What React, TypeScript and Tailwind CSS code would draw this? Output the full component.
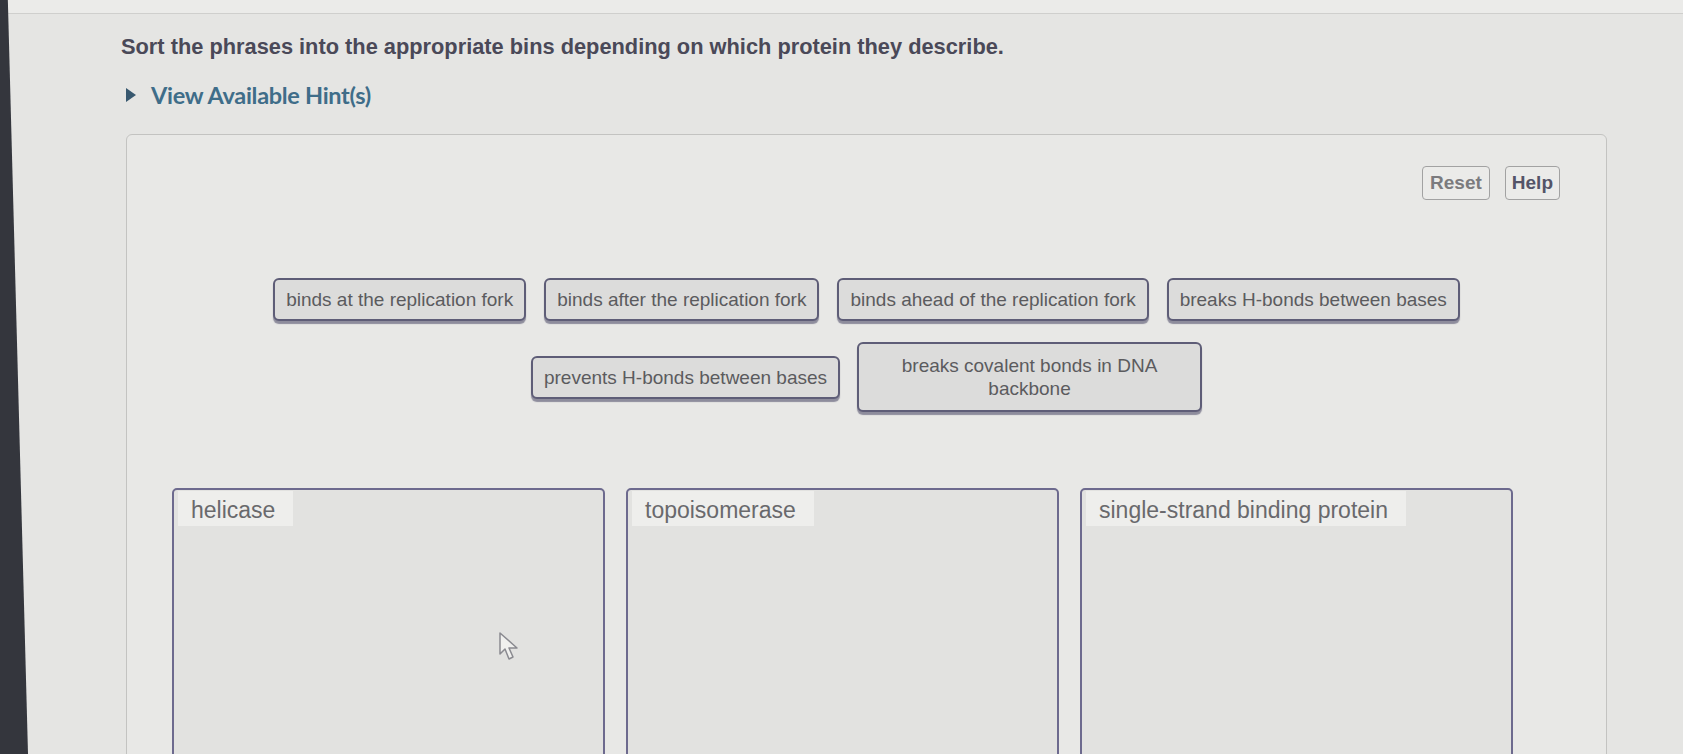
const phrasesTop = [
  "binds at the replication fork",
  "binds after the replication fork",
  "binds ahead of the replication fork",
  "breaks H-bonds between bases",
];

const bins = ["helicase", "topoisomerase", "single-strand binding protein"];

const Chip = ({ label, wide }: { label: string; wide?: boolean }) => (
  <div
    className={`border-2 border-[#5e5d77] bg-[#dcdcdb] rounded-[6px] shadow-[0_3px_1px_#8d8c9c] py-[8px] text-[19px] leading-[23px] text-[#5b5b5e] text-center ${
      wide ? "w-[345px] px-[9px] py-[10px]" : "px-[11px]"
    }`}
  >
    {label}
  </div>
);

const App = () => {
  return (
    <div
      className="relative h-screen w-full overflow-hidden bg-[#e5e5e3]"
      style={{ fontFamily: '"Liberation Sans", Arial, sans-serif' }}
    >
      {/* monitor bezel on the left */}
      <div className="absolute left-0 top-0 h-full w-[28px] pointer-events-none">
        <div className="h-full w-full bg-[#34363d] [clip-path:polygon(0_0,28%_0,100%_100%,0_100%)]"></div>
      </div>

      <div className="h-[14px] bg-[#ebebe9] border-b border-[#cfcfcd]"></div>

      <div className="pl-[121px] pt-[21px]">
        <h1 className="text-[21.8px] leading-[24px] font-bold text-[#4a4958]">
          Sort the phrases into the appropriate bins depending on which protein they describe.
        </h1>

        <div className="flex items-center gap-[15px] mt-[23px] pl-[5px]">
          <svg width="10" height="14" viewBox="0 0 10 14">
            <path d="M0 0 L10 7 L0 14 Z" fill="#38586f" />
          </svg>
          <span
            className="text-[23.5px] leading-[26px] font-bold text-[#3f6d89] tracking-[-0.3px]"
            style={{ fontFamily: "Lato, sans-serif" }}
          >
            View Available Hint(s)
          </span>
        </div>
      </div>

      {/* activity panel */}
      <div className="ml-[126px] mt-[26px] w-[1481px] h-[700px] border border-[#c3c3c1] rounded-[6px] bg-[#e8e8e6]">
        <div className="flex justify-end gap-[15px] pt-[31px] pr-[46px]">
          <button className="h-[34px] px-[7px] border-[1.5px] border-[#a2a2a2] rounded-[4px] bg-[#ebebe9] text-[19px] font-bold text-[#7b7b7e]">
            Reset
          </button>
          <button className="h-[34px] px-[6px] border-[1.5px] border-[#a2a2a2] rounded-[4px] bg-[#ebebe9] text-[19px] font-bold text-[#545468]">
            Help
          </button>
        </div>

        <div className="mt-[78px] flex flex-col items-center gap-[21px]">
          <div className="flex justify-center gap-[18px]">
            {phrasesTop.map((p) => (
              <Chip key={p} label={p} />
            ))}
          </div>
          <div className="flex items-center justify-center gap-[17px]">
            <Chip label="prevents H-bonds between bases" />
            <Chip label="breaks covalent bonds in DNA backbone" wide />
          </div>
        </div>

        <div className="mt-[76px] pl-[45px] flex gap-[21px]">
          {bins.map((b) => (
            <div
              key={b}
              className="w-[433px] h-[300px] border-2 border-[#6d6a8e] rounded-t-[5px] bg-[#e2e2e0]"
            >
              <div className="ml-[4px] mt-[1px] inline-block h-[35px] pl-[13px] pr-[18px] bg-[#eeeeec] text-[23px] leading-[38px] text-[#69696c]">
                {b}
              </div>
            </div>
          ))}
        </div>
      </div>

      {/* mouse pointer */}
      <svg
        className="absolute left-[499px] top-[632px] pointer-events-none"
        width="24"
        height="32"
        viewBox="0 0 24 32"
      >
        <path
          d="M1 1 L1 22 L6 17 L10 27 L14 25 L10 16 L18 16 Z"
          fill="#f0f0ee"
          stroke="#8a8a90"
          strokeWidth="1.5"
          strokeLinejoin="round"
        />
      </svg>
    </div>
  );
};

export default App;
